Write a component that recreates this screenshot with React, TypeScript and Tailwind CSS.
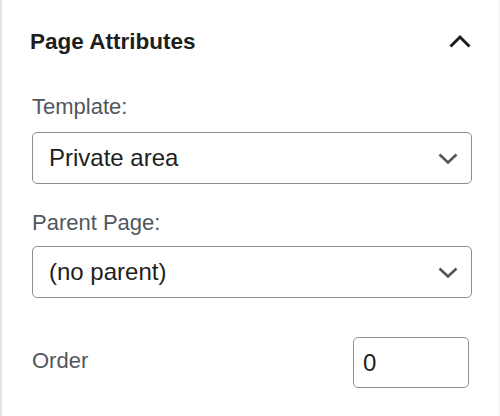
import React from 'react';

function ChevronDown({ className }: { className?: string }) {
  return (
    <svg viewBox="0 0 20 11" width="20" height="11" className={className} fill="none">
      <path d="M1.5 1.5L10 9.5L18.5 1.5" stroke="currentColor" strokeWidth="2.6" strokeLinejoin="miter" />
    </svg>
  );
}

function ChevronUp({ className }: { className?: string }) {
  return (
    <svg viewBox="0 0 22 14" width="22" height="14" className={className} fill="none">
      <path d="M1.5 12.5L11 3L20.5 12.5" stroke="currentColor" strokeWidth="3" strokeLinejoin="miter" />
    </svg>
  );
}

function SelectBox({ value }: { value: string }) {
  return (
    <div className="flex h-[52px] w-[440px] items-center justify-between rounded-[5px] border border-[#8c8f94] bg-white pl-[16px] pr-[13px]">
      <span className="text-[24px] leading-[28px] text-[#1e1e1e]">{value}</span>
      <ChevronDown className="text-[#50575e]" />
    </div>
  );
}

export default function App() {
  return (
    <div className="h-[416px] w-[500px] border-l-2 border-r border-l-[#e4e4e7] border-r-[#f3f3f3] bg-white pl-[30px] pr-[27px] font-['Liberation_Sans',Arial,sans-serif]">
      {/* Panel header */}
      <div className="flex items-center justify-between pt-[28px]">
        <h2 className="-ml-[2px] text-[22.5px] font-bold leading-[28px] text-[#1e1e1e]">Page Attributes</h2>
        <ChevronUp className="-mt-[3px] mr-[1px] text-[#1e1e1e]" />
      </div>

      <div className="mt-[37px] flex flex-col">
        <label className="text-[22px] leading-[28px] text-[#50575e]">Template:</label>
        <div className="mt-[11px]">
          <SelectBox value="Private area" />
        </div>

        <label className="mt-[25px] text-[22px] leading-[28px] text-[#50575e]">Parent Page:</label>
        <div className="mt-[9px]">
          <SelectBox value="(no parent)" />
        </div>

        <div className="mt-[39px] flex items-center justify-between pr-[3px]">
          <span className="-mt-[4px] text-[22px] leading-[28px] text-[#50575e]">Order</span>
          <div className="flex h-[51px] w-[116px] items-center rounded-[5px] border border-[#8c8f94] pl-[9px]">
            <span className="text-[24px] leading-[28px] text-[#1e1e1e]">0</span>
          </div>
        </div>
      </div>
    </div>
  );
}
